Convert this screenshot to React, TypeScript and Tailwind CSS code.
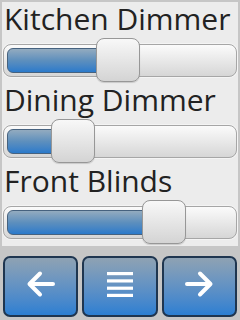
const sliders = [
  { label: 'Kitchen Dimmer', value: 49 },
  { label: 'Dining Dimmer', value: 25 },
  { label: 'Front Blinds', value: 73 },
];

const TRACK_W = 234;
const THUMB_W = 44;

function Slider({ value }: { value: number }) {
  const left = Math.round(((TRACK_W - THUMB_W) * value) / 100);
  return (
    <div className="relative mx-[1px] flex h-[44px] items-center">
      <div className="h-[33px] w-full rounded-[8px] border border-[#a6a6a6] bg-gradient-to-b from-[#fbfbfb] to-[#d6d6d6] p-[3px] shadow-[0_0_0_1px_#f4f4f4]">
        <div
          className="h-full rounded-[6px] border border-[#46627f] bg-gradient-to-b from-[#93abbf] via-[#5d8fbd] to-[#2a7acb]"
          style={{ width: left + THUMB_W / 2 }}
        />
      </div>
      <div
        className="absolute top-0 h-[44px] w-[44px] rounded-[8px] border border-[#979797] bg-gradient-to-b from-[#f8f8f8] to-[#d4d4d4] shadow-[0_1px_1px_rgba(0,0,0,0.15)]"
        style={{ left }}
      />
    </div>
  );
}

function NavButton({ children }: { children: React.ReactNode }) {
  return (
    <button className="flex h-[61px] items-center justify-center rounded-[7px] border-2 border-[#1f3650] bg-gradient-to-b from-[#8ea2b3] to-[#2c7fd2] pb-[5px]">
      {children}
    </button>
  );
}

export default function App() {
  return (
    <div className="flex h-[320px] w-[240px] flex-col bg-[#c6c6c6] p-[2px] font-['Open_Sans',sans-serif] text-[#222]">
      <div className="flex h-[244px] flex-col gap-[2px] bg-[#ececec] pt-[1px]">
        {sliders.map((s) => (
          <div key={s.label} className="flex flex-col">
            <div className="h-[32px] whitespace-nowrap pl-[2px] text-[30px] leading-[32px]">{s.label}</div>
            <div className="mt-[3px]">
              <Slider value={s.value} />
            </div>
          </div>
        ))}
      </div>
      <div className="mt-[10px] grid grid-cols-3 gap-[4px] px-[1px]">
        <NavButton>
          <svg width="30" height="28" viewBox="0 0 30 28" fill="none" stroke="white" strokeWidth="4" strokeLinecap="round" strokeLinejoin="round">
            <path d="M27 14H4M14 3.5L3.5 14L14 24.5" />
          </svg>
        </NavButton>
        <NavButton>
          <svg width="28" height="26" viewBox="0 0 28 26" fill="white">
            <rect x="1" y="1" width="26" height="3.2" />
            <rect x="1" y="8.3" width="26" height="3.2" />
            <rect x="1" y="15.6" width="26" height="3.2" />
            <rect x="1" y="22.8" width="26" height="3.2" />
          </svg>
        </NavButton>
        <NavButton>
          <svg width="30" height="28" viewBox="0 0 30 28" fill="none" stroke="white" strokeWidth="4" strokeLinecap="round" strokeLinejoin="round">
            <path d="M3 14H26M16 3.5L26.5 14L16 24.5" />
          </svg>
        </NavButton>
      </div>
    </div>
  );
}
